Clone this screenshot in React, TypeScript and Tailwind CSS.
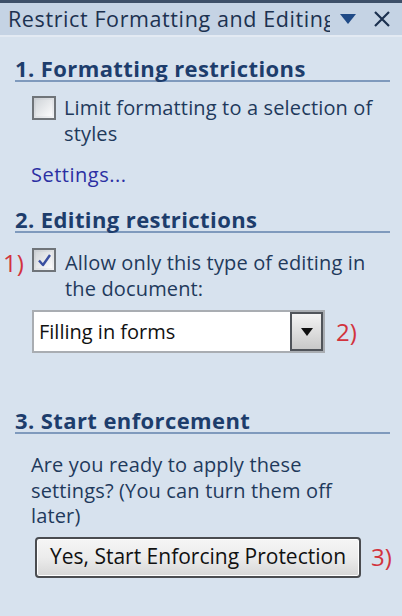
import React from "react";

const font = { fontFamily: '"Open Sans", "Noto Sans", sans-serif' };

function Check({ checked }: { checked?: boolean }) {
  return (
    <div className="w-[24px] h-[24px] shrink-0 border-2 border-[#6f7479] bg-gradient-to-br from-[#c9cdd2] to-[#f3f4f6] p-[2px] flex items-center justify-center">
      <div className="w-full h-full bg-gradient-to-br from-[#d3d7db] to-[#fbfbfc] flex items-center justify-center">
        {checked && (
          <svg width="15" height="15" viewBox="0 0 15 15">
            <path d="M2 7.5 L6 12 L13 2" fill="none" stroke="#3a4fa0" strokeWidth="2.4" strokeLinejoin="round" />
          </svg>
        )}
      </div>
    </div>
  );
}

function Heading({ children }: { children: React.ReactNode }) {
  return (
    <div className="ml-[15px] mr-[12px] border-b-2 border-[#7f9abd] leading-[23px] text-[22px] font-bold text-[#1d3d6c] tracking-[0.4px]">
      {children}
    </div>
  );
}

export default function App() {
  return (
    <div className="w-[402px] h-[616px] bg-[#d7e2ee] overflow-hidden text-[#1f3a5c]" style={font}>
      <div className="h-[3px] bg-[#3d4f68]" />
      <div className="h-[34px] bg-[#c5d3e4] border-b-2 border-[#e3eaf3] flex items-center pl-[8px] pr-[10px]">
        <div className="w-[322px] shrink-0 overflow-hidden whitespace-nowrap text-[21.5px] text-[#1c3150] leading-[30px] tracking-[0.6px]">
          Restrict Formatting and Editing
        </div>
        <svg width="18" height="12" viewBox="0 0 18 12" className="ml-[9px] shrink-0">
          <path d="M1 1 H17 L9 11 Z" fill="#1f4a86" />
        </svg>
        <svg width="18" height="18" viewBox="0 0 18 18" className="ml-[16px] shrink-0">
          <path d="M2 2 L16 16 M16 2 L2 16" stroke="#1c3150" strokeWidth="2.2" />
        </svg>
      </div>

      <div className="pt-[20px]">
        <Heading>1. Formatting restrictions</Heading>
        <div className="flex items-start pl-[32px] pr-[12px] pt-[13px]">
          <div className="pt-[1px] shrink-0"><Check /></div>
          <div className="ml-[8px] text-[20px] leading-[26px] tracking-[0.15px]">Limit formatting to a selection of styles</div>
        </div>
        <div className="pl-[31px] pt-[16px] text-[20px] leading-[24px] text-[#2b2fa3] tracking-[0.5px]">Settings...</div>
      </div>

      <div className="pt-[21px]">
        <Heading>2. Editing restrictions</Heading>
        <div className="flex items-start pl-[3px] pr-[12px] pt-[17px]">
          <div className="w-[29px] shrink-0 text-[24px] leading-[26px] text-[#d2333d]">1)</div>
          <div className="-mt-[2px] shrink-0"><Check checked /></div>
          <div className="ml-[9px] text-[20px] leading-[26px] tracking-[0.15px]">Allow only this type of editing in the document:</div>
        </div>
        <div className="flex items-center pl-[32px] pt-[8px]">
          <div className="w-[293px] h-[43px] flex border-2 border-[#a9adb2] bg-white">
            <div className="flex-1 flex items-center pl-[5px] text-[20px] text-[#111]">Filling in forms</div>
            <div className="w-[33px] border-2 border-[#50545a] bg-gradient-to-b from-[#f4f4f4] to-[#c9c9c9] flex items-center justify-center">
              <svg width="12" height="8" viewBox="0 0 12 8"><path d="M0 0 H12 L6 8 Z" fill="#111" /></svg>
            </div>
          </div>
          <div className="ml-[11px] text-[24px] text-[#d2333d]">2)</div>
        </div>
      </div>

      <div className="pt-[56px]">
        <Heading>3. Start enforcement</Heading>
        <div className="pl-[31px] pr-[20px] pt-[18px] text-[20px] leading-[25.5px] tracking-[0.15px]">
          Are you ready to apply these settings? (You can turn them off later)
        </div>
        <div className="flex items-center pl-[35px] pt-[8px]">
          <div className="w-[326px] h-[41px] rounded-[4px] border-2 border-[#4a4c50] bg-gradient-to-b from-[#f5f5f5] via-[#ececec] to-[#d7d7d7] shadow-[inset_0_0_0_1px_#ffffff] flex items-center justify-center text-[21px] text-[#111]">
            Yes, Start Enforcing Protection
          </div>
          <div className="ml-[10px] text-[24px] text-[#d2333d]">3)</div>
        </div>
      </div>
    </div>
  );
}
